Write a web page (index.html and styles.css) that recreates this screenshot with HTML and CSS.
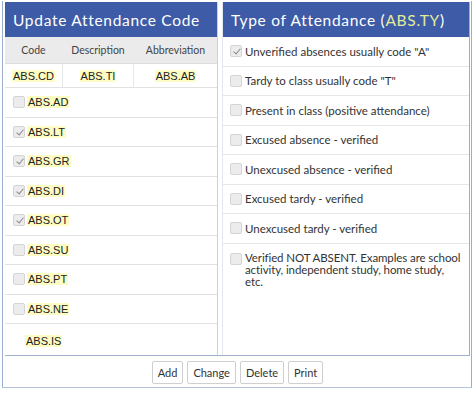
FILE: index.html
```html
<!DOCTYPE html>
<html>
<head>
<meta charset="utf-8">
<link rel="stylesheet" href="styles.css">
</head>
<body>
<div class="frame">
  <div class="panels">
    <section class="panel left">
      <div class="head">Update Attendance Code</div>
      <div class="cols">
        <span class="c1">Code</span><span class="c2">Description</span><span class="c3">Abbreviation</span>
      </div>
      <div class="cols vals">
        <span class="c1"><mark>ABS.CD</mark></span><span class="c2"><mark>ABS.TI</mark></span><span class="c3"><mark>ABS.AB</mark></span>
      </div>
      <div class="row"><i class="cb"></i><mark>ABS.AD</mark></div>
      <div class="row"><i class="cb on"></i><mark>ABS.LT</mark></div>
      <div class="row"><i class="cb on"></i><mark>ABS.GR</mark></div>
      <div class="row"><i class="cb on"></i><mark>ABS.DI</mark></div>
      <div class="row"><i class="cb on"></i><mark>ABS.OT</mark></div>
      <div class="row"><i class="cb"></i><mark>ABS.SU</mark></div>
      <div class="row"><i class="cb"></i><mark>ABS.PT</mark></div>
      <div class="row"><i class="cb"></i><mark>ABS.NE</mark></div>
      <div class="row last"><mark class="nocb">ABS.IS</mark></div>
    </section>
    <section class="panel right">
      <div class="head">Type of Attendance (<span class="code">ABS.TY</span>)</div>
      <div class="trow"><i class="cb on"></i><span>Unverified absences usually code "A"</span></div>
      <div class="trow"><i class="cb"></i><span>Tardy to class usually code "T"</span></div>
      <div class="trow"><i class="cb"></i><span>Present in class (positive attendance)</span></div>
      <div class="trow"><i class="cb"></i><span>Excused absence - verified</span></div>
      <div class="trow"><i class="cb"></i><span>Unexcused absence - verified</span></div>
      <div class="trow"><i class="cb"></i><span>Excused tardy - verified</span></div>
      <div class="trow"><i class="cb"></i><span>Unexcused tardy - verified</span></div>
      <div class="trow multi"><i class="cb"></i><span>Verified NOT ABSENT. Examples are school activity, independent study, home study,<br>etc.</span></div>
    </section>
  </div>
  <div class="footer">
    <button>Add</button><button>Change</button><button>Delete</button><button>Print</button>
  </div>
</div>
</body>
</html>
```

FILE: styles.css
```css
html, body {
  margin: 0;
  padding: 0;
  background: #ffffff;
}
body {
  font-family: Lato, "DejaVu Sans", sans-serif;
  color: #333;
}
.frame {
  margin: 1px 0 0 2px;
  width: 470px;
  border-left: 1px solid #9aaed0;
  border-right: 1px solid #9aaed0;
  border-bottom: 1px solid #b5c4dd;
  padding: 1px 1px 0 2px;
  height: 387px;
  box-sizing: border-box;
  display: flex;
  flex-direction: column;
}
.panels {
  display: grid;
  grid-template-columns: 213px 248px;
  gap: 4px;
  height: 353px;
  border-bottom: 1px solid #9fb0cc;
}
.panel {
  display: flex;
  flex-direction: column;
  background: #fff;
}
.panel.left {
  border-right: 1px solid #c9d2e2;
}
.panel.right {
  border-right: 1px solid #9aaed0;
  border-left: 1px solid #e2e6ee;
}
.head {
  height: 35px;
  flex: none;
  background: #3d5ba6;
  color: #fff;
  font-size: 15.5px;
  letter-spacing: 0.7px;
  display: flex;
  align-items: center;
  padding-left: 8px;
  box-sizing: border-box;
  white-space: nowrap;
}
.head .code {
  color: #e3eb9a;
}
.cols {
  display: grid;
  grid-template-columns: 57px 72px 1fr;
  height: 27px;
  background: #ebebeb;
  font-size: 10.5px;
  color: #444;
  border-bottom: 1px solid #ddd;
  box-sizing: border-box;
}
.cols span {
  display: flex;
  align-items: center;
  justify-content: center;
}
.cols.vals {
  background: #fff;
  height: 24px;
  font-family: "Liberation Sans", Arial, sans-serif;
  font-size: 11px;
  color: #222;
  border-bottom: 1px solid #e2e2e2;
}
.cols.vals .c2 {
  border-left: 1px solid #e6e6e6;
  border-right: 1px solid #e6e6e6;
}
mark {
  background: #fdfcc2;
  color: #222;
  padding: 0 1px;
}
.row {
  height: 29.5px;
  display: flex;
  align-items: center;
  padding-left: 8px;
  border-bottom: 1px solid #e2e2e2;
  box-sizing: border-box;
  font-family: "Liberation Sans", Arial, sans-serif;
  font-size: 11px;
}
.row.last {
  flex: 1;
  border-bottom: none;
  padding-top: 2px;
}
.row .nocb {
  margin-left: 12px;
}
.cb {
  width: 12px;
  height: 12px;
  border: 1px solid #d4d4d4;
  background: #ececec;
  border-radius: 2px;
  box-sizing: border-box;
  margin-right: 2px;
  flex: none;
  position: relative;
}
.cb.on::after {
  content: "";
  position: absolute;
  left: 3.5px;
  top: 1px;
  width: 3px;
  height: 6px;
  border-right: 1.6px solid #8a8a8a;
  border-bottom: 1.6px solid #8a8a8a;
  transform: rotate(40deg);
}
.trow {
  height: 29.5px;
  display: flex;
  align-items: center;
  padding-left: 7px;
  border-bottom: 1px solid #e6e6e6;
  box-sizing: border-box;
  font-size: 11.5px;
  color: #333;
}
.trow .cb {
  margin-right: 3px;
}
.trow.multi {
  height: auto;
  align-items: flex-start;
  padding-top: 8px;
  padding-bottom: 10px;
  border-bottom: none;
  line-height: 12px;
  padding-right: 2px;
}
.trow.multi span {
  letter-spacing: -0.1px;
}
.trow.multi .cb {
  margin-top: 1px;
}
.footer {
  flex: 1;
  display: flex;
  justify-content: center;
  align-items: center;
  gap: 4px;
  padding-top: 1px;
}
.footer button {
  font-family: Lato, "DejaVu Sans", sans-serif;
  font-size: 11px;
  color: #333;
  background: #fff;
  border: 1px solid #cfcfcf;
  border-radius: 2px;
  height: 23px;
  padding: 0 5px;
}
```
